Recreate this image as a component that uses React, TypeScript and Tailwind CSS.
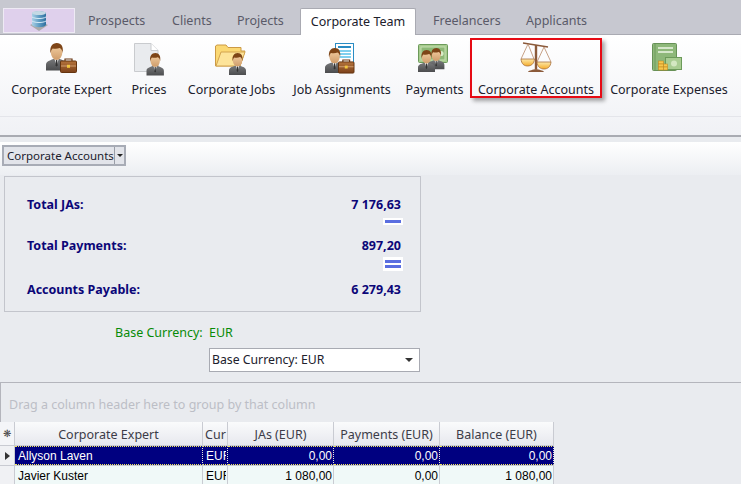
import React from "react";

const Person = ({ x = 0, y = 0, s = 1, id }: { x?: number; y?: number; s?: number; id: string }) => (
  <g transform={`translate(${x} ${y}) scale(${s})`}>
    <defs>
      <linearGradient id={id + "f"} x1="0" y1="0" x2="0" y2="1">
        <stop offset="0" stopColor="#f3cfa2" />
        <stop offset="1" stopColor="#cf9c6a" />
      </linearGradient>
      <linearGradient id={id + "s"} x1="0" y1="0" x2="0" y2="1">
        <stop offset="0" stopColor="#77787a" />
        <stop offset="1" stopColor="#4b4c4e" />
      </linearGradient>
    </defs>
    <path d="M0 26 V20.5 C0 17.5 3 16.5 7 15 H13 C17 16.5 20 17.5 20 20.5 V26 Z" fill={`url(#${id}s)`} />
    <path d="M8 15 L10 21 L12 15 Z" fill="#f4f4f4" />
    <path d="M9.4 16 H10.6 L10.9 21 L10 22.5 L9.1 21 Z" fill="#333" />
    <ellipse cx="10" cy="9" rx="5.4" ry="7" fill={`url(#${id}f)`} />
    <path d="M4.3 10 C3.2 3.5 6 0 10.2 0 C14.4 0 16.7 3.4 15.7 9.5 C15.3 6.8 14.4 5.4 13 4.8 C10.8 5.7 8 5.6 6.3 5.2 C5.1 6.3 4.6 7.8 4.3 10 Z" fill="#7e4517" />
  </g>
);

const Case = ({ x = 0, y = 0, s = 1, id }: { x?: number; y?: number; s?: number; id: string }) => (
  <g transform={`translate(${x} ${y}) scale(${s})`}>
    <defs>
      <linearGradient id={id} x1="0" y1="0" x2="0" y2="1">
        <stop offset="0" stopColor="#b4733c" />
        <stop offset="1" stopColor="#7c411a" />
      </linearGradient>
    </defs>
    <path d="M5 3 V1 H12 V3" fill="none" stroke="#6a3713" strokeWidth="1.2" />
    <rect x="0.5" y="3" width="16" height="11.5" rx="1" fill={`url(#${id})`} stroke="#65340f" />
    <path d="M1 8 H16" stroke="#e0b184" strokeWidth="0.8" />
    <rect x="7" y="6.8" width="3" height="3" fill="#f2c63e" />
  </g>
);

const Ic = ({ children }: { children: React.ReactNode }) => (
  <svg width="36" height="34" viewBox="0 0 36 34" className="block">
    {children}
  </svg>
);

const ExpertIcon = () => (
  <Ic>
    <Person id="a" x="2" y="1" s={1.06} />
    <Case id="ac" x="16" y="16" s={1} />
  </Ic>
);

const PricesIcon = () => (
  <Ic>
    <path d="M3.5 1.5 H20 L27 8.5 V29.5 H3.5 Z" fill="#e9ebee" stroke="#c9cbce" />
    <path d="M20 1.5 V8.5 H27" fill="#fff" stroke="#c9cbce" />
    <Person id="b" x="15.5" y="11" s={0.87} />
  </Ic>
);

const JobsIcon = () => (
  <Ic>
    <path d="M1.5 4 V24 H26 L31 9 H27 V5.5 H14 L12 3 H3 Z" fill="#fbd873" stroke="#cc9a45" />
    <path d="M2 24 L7 10 H31 L26 24 Z" fill="#fde49a" stroke="#d3a450" />
    <Person id="c" x="15" y="11" s={0.85} />
  </Ic>
);

const AssignIcon = () => (
  <Ic>
    <rect x="11.5" y="1.5" width="18" height="22" fill="#fff" stroke="#2a8cc4" />
    <path d="M14 5 H27" stroke="#2a8cc4" strokeWidth="2" />
    <path d="M14 9 H27 M14 12 H27 M14 15 H27" stroke="#7fd0ee" strokeWidth="2" />
    <Person id="d" x="1" y="6" s={0.96} />
    <Case id="dc" x="14" y="17" s={0.97} />
  </Ic>
);

const PayIcon = () => (
  <Ic>
    <rect x="1.5" y="2.5" width="29" height="18" rx="1" fill="#a6cb8d" stroke="#6c9a5a" />
    <rect x="4" y="5" width="24" height="13" fill="#8db876" stroke="#c4deb0" />
    <circle cx="24" cy="11.5" r="2.6" fill="#d8ebc7" />
    <Person id="e2" x="11" y="6" s={0.82} />
    <Person id="e1" x="1" y="8" s={0.85} />
  </Ic>
);

const ScaleIcon = () => (
  <Ic>
    <defs>
      <linearGradient id="pan" x1="0" y1="0" x2="0" y2="1">
        <stop offset="0" stopColor="#fde9a8" />
        <stop offset="1" stopColor="#f4ab2b" />
      </linearGradient>
    </defs>
    <path d="M5 1 L30 5" stroke="#8b5a3a" strokeWidth="1.6" />
    <path d="M18 3 V27" stroke="#8b5a3a" strokeWidth="2.4" />
    <path d="M10 30 C11 28 15 28 18 27 C21 28 25 28 26 30 Z" fill="#8b5a3a" />
    <path d="M10 2 L3 17 M10 2 L16 17 M26 5 L19 20 M26 5 L33 20" stroke="#b98a6a" strokeWidth="0.8" fill="none" />
    <path d="M3 17 H16.5 C16 22 13 24 9.7 24 C6 24 3.5 22 3 17 Z" fill="url(#pan)" stroke="#a76f3c" strokeWidth="0.8" />
    <path d="M19 20 H33 C32.5 25 29.5 27 26 27 C22.5 27 19.5 25 19 20 Z" fill="url(#pan)" stroke="#a76f3c" strokeWidth="0.8" />
  </Ic>
);

const ExpensesIcon = () => (
  <Ic>
    <rect x="1.5" y="1.5" width="24" height="27" rx="1" fill="#8eb87a" stroke="#679157" />
    <path d="M4 2 V28" stroke="#6e9a5c" strokeWidth="1" />
    <path d="M7 6 H22 M7 10 H22" stroke="#eef6e6" strokeWidth="1.6" />
    <rect x="14.5" y="15.5" width="16" height="12" fill="#a9cd92" stroke="#6c9a5a" />
    <circle cx="23" cy="21.5" r="3" fill="#d4e8c2" />
    <g fill="#f7c74c" stroke="#c48a20" strokeWidth="0.6">
      <rect x="7.5" y="19" width="5" height="3" />
      <rect x="7.5" y="22" width="5" height="3" />
      <rect x="7.5" y="25" width="5" height="3" />
      <rect x="12.5" y="22" width="4" height="3" />
      <rect x="12.5" y="25" width="4" height="3" />
    </g>
  </Ic>
);

const LogoIcon = () => (
  <svg width="20" height="22" viewBox="0 0 20 22" className="block">
    <defs>
      <linearGradient id="lg" x1="0" y1="0" x2="1" y2="0">
        <stop offset="0" stopColor="#a9d0e6" />
        <stop offset="0.5" stopColor="#5f9dc4" />
        <stop offset="1" stopColor="#2f6f9e" />
      </linearGradient>
    </defs>
    <path d="M1 15 L10 21 L19 15 L10 11 Z" fill="#aaa" />
    <path d="M3 3 C5 0.5 15 0.5 17 3 V15 C15 18 5 18 3 15 Z" fill="url(#lg)" />
    <path d="M3 7 C6 9 14 9 17 7 M3 11 C6 13 14 13 17 11" stroke="#d6ebf6" fill="none" />
    <ellipse cx="10" cy="3" rx="7" ry="2" fill="#c4d9e4" />
  </svg>
);

const items: { label: string; w: string; icon: React.ReactNode; ml: string }[] = [
  { label: "Corporate Expert", w: "w-[101px]", icon: <ExpertIcon />, ml: "ml-0" },
  { label: "Prices", w: "w-[34px]", icon: <PricesIcon />, ml: "ml-[20px]" },
  { label: "Corporate Jobs", w: "w-[91px]", icon: <JobsIcon />, ml: "ml-[20px]" },
  { label: "Job Assignments", w: "w-[98px]", icon: <AssignIcon />, ml: "ml-[16px]" },
  { label: "Payments", w: "w-[55px]", icon: <PayIcon />, ml: "ml-[16px]" },
];

const Item = ({ label, w, icon, ml }: { label: string; w: string; icon: React.ReactNode; ml: string }) => (
  <div className={`flex flex-col items-center ${w} ${ml}`}>
    <div className="h-[41px] pt-[1px]">{icon}</div>
    <div className="whitespace-nowrap text-[12.5px] leading-[16px] text-[#20202c]">{label}</div>
  </div>
);

const Tab = ({ label, className }: { label: string; className: string }) => (
  <div className={`text-[12.5px] leading-[25px] text-[#5a5a68] whitespace-nowrap ${className}`}>{label}</div>
);

const Eq = ({ double, className }: { double?: boolean; className: string }) => (
  <div className={`ml-auto mr-[17px] w-[20px] bg-white flex flex-col justify-center gap-[2px] items-center ${className}`}>
    <div className="w-[16px] h-[3px] bg-[#5a6ee0]" />
    {double && <div className="w-[16px] h-[3px] bg-[#5a6ee0]" />}
  </div>
);

const Row = ({ a, b }: { a: string; b: string }) => (
  <div className="flex justify-between pl-[22px] pr-[19px] text-[12.5px] font-bold leading-[16px] text-[#0b0678]">
    <span>{a}</span>
    <span>{b}</span>
  </div>
);

const cols = ["w-[188px]", "w-[25px]", "w-[106px]", "w-[106px]", "w-[114px]"];

const HeaderCell = ({ label, w, cls = "justify-center" }: { label: string; w: string; cls?: string }) => (
  <div className={`${w} shrink-0 h-full pt-[4px] flex items-center ${cls} overflow-hidden border-r border-[#c9cbd2] bg-gradient-to-b from-[#fafbfc] to-[#e7e8ee] text-[12.5px] text-[#3c3c48]`}>
    {label}
  </div>
);

const GridRow = ({ cells, selected }: { cells: string[]; selected?: boolean }) => (
  <div className="flex h-[20px] w-[554px] border-b border-[#c9cbd2] font-['Liberation_Sans',sans-serif] text-[12px]">
    <div className="w-[15px] shrink-0 bg-[#f0f1f4] border-r border-[#c9cbd2] flex items-center justify-center">
      {selected && <div className="w-0 h-0 border-y-[4px] border-y-transparent border-l-[5px] border-l-[#333]" />}
    </div>
    {cells.map((c, i) => (
      <div
        key={i}
        className={`${cols[i]} shrink-0 h-full flex items-center whitespace-nowrap pl-[3px] pr-[1px] ${
          i >= 2 ? "justify-end" : "justify-start"
        } ${
          selected
            ? "bg-[#000080] text-white border-r border-r-[#e4e6da] border-y border-y-[#f2e75a] border-dotted"
            : "bg-[#f0f9f8] text-black border-r border-[#c9cbd2]"
        }`}
      >
        {i === 1 ? <span className="block w-[20px] overflow-hidden">{c}</span> : c}
      </div>
    ))}
  </div>
);

export default function App() {
  return (
    <div className="w-[741px] h-[484px] overflow-hidden bg-[#e9ebef] font-['Noto_Sans',sans-serif]">
      {/* tabs */}
      <div className="h-[35px] bg-[#c7c8d0] border-b border-[#a9aab2] flex items-end relative">
        <div className="ml-[3px] mb-[1px] w-[72px] h-[25px] bg-[#dfd0ec] border border-[#eeeaf4] flex items-center justify-center">
          <LogoIcon />
        </div>
        <Tab label="Prospects" className="ml-[13px] mb-[1px] w-[57px]" />
        <Tab label="Clients" className="ml-[27px] mb-[1px] w-[38px]" />
        <Tab label="Projects" className="ml-[27px] mb-[1px] w-[46px]" />
        <div className="ml-[17px] w-[116px] h-[27px] -mb-[1px] bg-white border-x border-t border-[#a9aab2] rounded-t-[2px] text-center text-[12.5px] leading-[26px] text-[#20202c] whitespace-nowrap">
          Corporate Team
        </div>
        <Tab label="Freelancers" className="ml-[17px] mb-[1px] w-[66px]" />
        <Tab label="Applicants" className="ml-[27px] mb-[1px] w-[60px]" />
      </div>
      {/* ribbon */}
      <div className="h-[102px] bg-gradient-to-b from-white to-[#f0f1f5] border-b-2 border-[#a9abb2]">
        <div className="h-[82px] border-b border-[#e4e5ea] flex items-start pl-[11px] pt-[6px]">
          {items.map((it) => (
            <Item key={it.label} {...it} />
          ))}
          <div className="ml-[8px] -mt-[3px] w-[132px] h-[60px] border-2 border-[#e60a14] shadow-[3px_3px_4px_rgba(0,0,0,0.35)] flex flex-col items-center">
            <div className="h-[42px] shrink-0 pt-[2px]"><ScaleIcon /></div>
            <div className="whitespace-nowrap text-[12.5px] leading-[16px] text-[#20202c]">Corporate Accounts</div>
          </div>
          <Item label="Corporate Expenses" w="w-[118px]" icon={<ExpensesIcon />} ml="ml-[8px]" />
        </div>
      </div>
      {/* toolbar */}
      <div className="h-[33px] mt-[5px] bg-gradient-to-b from-white to-[#eceef2] pl-[2px] pt-[3px]">
        <div className="w-[124px] h-[21px] bg-[#e2e4ea] border-2 border-[#a8acb6] flex items-center text-[11.5px] text-[#20202c]">
          <span className="pl-[3px] pt-[1px] w-[110px] whitespace-nowrap leading-none">Corporate Accounts</span>
          <div className="flex-1 h-full border-l border-[#9a9ea8] flex items-center justify-center">
            <div className="w-0 h-0 border-x-[3px] border-x-transparent border-t-[3px] border-t-[#222]" />
          </div>
        </div>
      </div>
      {/* summary */}
      <div className="ml-[4px] mt-[1px] w-[417px] h-[136px] border border-[#c3c5cc] pt-[20px] flex flex-col">
        <Row a="Total JAs:" b="7 176,63" />
        <Eq className="h-[7px] mt-[5px] mb-[13px]" />
        <Row a="Total Payments:" b="897,20" />
        <Eq double className="h-[14px] mt-[3px] mb-[11px]" />
        <Row a="Accounts Payable:" b="6 279,43" />
      </div>
      {/* currency */}
      <div className="mt-[13px] pl-[115px] flex text-[12.5px] leading-[16px] text-[#078a07]">
        <span className="w-[94px] whitespace-nowrap">Base Currency:</span>
        <span>EUR</span>
      </div>
      <div className="ml-[209px] mt-[7px] w-[211px] h-[24px] bg-white border border-[#a8aab2] flex items-center justify-between pl-[2px] pr-[6px] text-[12.25px] text-[#20202c]">
        <span className="whitespace-nowrap">Base Currency: EUR</span>
        <div className="w-0 h-0 border-x-[4px] border-x-transparent border-t-[4px] border-t-[#333]" />
      </div>
      {/* grid */}
      <div className="mt-[10px] border-t border-l border-[#b4b5bc]">
        <div className="h-[39px] pl-[8px] pt-[14px] text-[12.5px] leading-[16px] text-[#bcbec6]">
          Drag a column header here to group by that column
        </div>
        <div className="flex h-[24px] w-[554px] border-b border-[#c9cbd2] -ml-[1px]">
          <div className="w-[15px] shrink-0 h-full flex items-center justify-center border-r border-[#c9cbd2] bg-[#f4f5f8] text-[10px] text-[#444]">
            ❋
          </div>
          <HeaderCell label="Corporate Expert" w={cols[0]} />
          <HeaderCell label="Cur" w={cols[1]} cls="justify-start pl-[2px]" />
          <HeaderCell label="JAs (EUR)" w={cols[2]} />
          <HeaderCell label="Payments (EUR)" w={cols[3]} />
          <HeaderCell label="Balance (EUR)" w={cols[4]} />
        </div>
        <div className="-ml-[1px]">
          <GridRow selected cells={["Allyson Laven", "EUR", "0,00", "0,00", "0,00"]} />
          <GridRow cells={["Javier Kuster", "EUR", "1 080,00", "0,00", "1 080,00"]} />
        </div>
      </div>
    </div>
  );
}
